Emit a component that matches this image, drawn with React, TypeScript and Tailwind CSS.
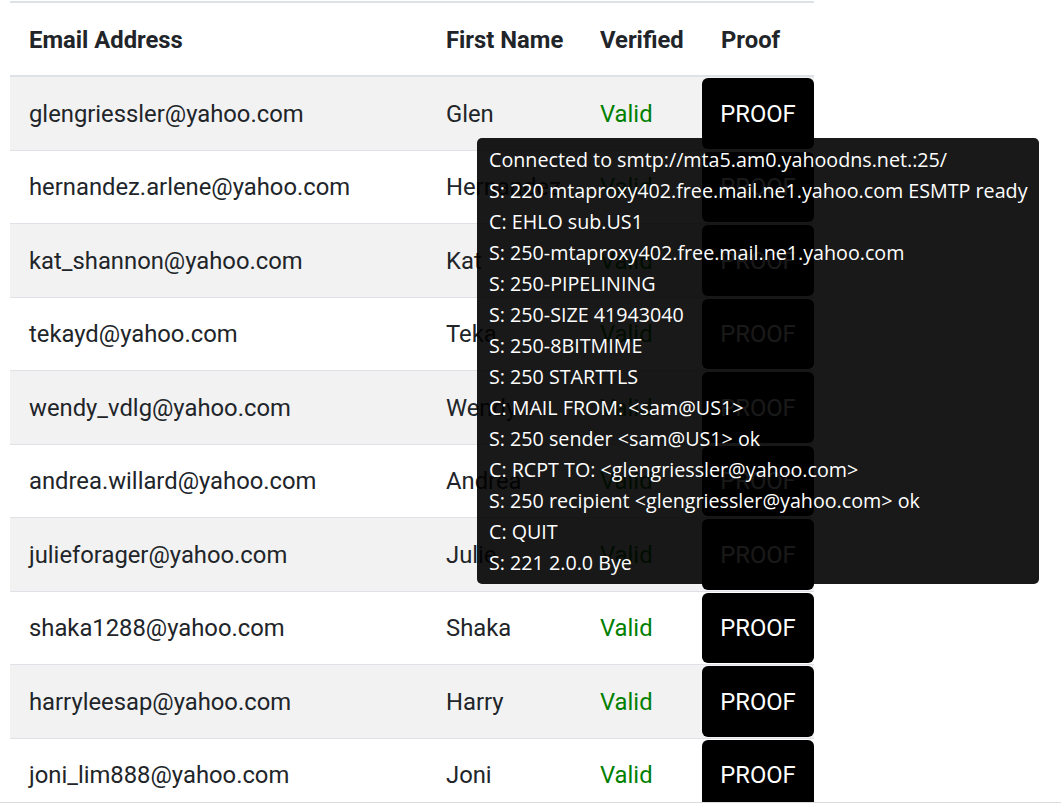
const rows = [
    { email: "glengriessler@yahoo.com", name: "Glen" },
    { email: "hernandez.arlene@yahoo.com", name: "Hernandez" },
    { email: "kat_shannon@yahoo.com", name: "Kat" },
    { email: "tekayd@yahoo.com", name: "Teka" },
    { email: "wendy_vdlg@yahoo.com", name: "Wendy" },
    { email: "andrea.willard@yahoo.com", name: "Andrea" },
    { email: "julieforager@yahoo.com", name: "Julie" },
    { email: "shaka1288@yahoo.com", name: "Shaka" },
    { email: "harryleesap@yahoo.com", name: "Harry" },
    { email: "joni_lim888@yahoo.com", name: "Joni" },
]

const transcript = [
    "Connected to smtp://mta5.am0.yahoodns.net.:25/",
    "S: 220 mtaproxy402.free.mail.ne1.yahoo.com ESMTP ready",
    "C: EHLO sub.US1",
    "S: 250-mtaproxy402.free.mail.ne1.yahoo.com",
    "S: 250-PIPELINING",
    "S: 250-SIZE 41943040",
    "S: 250-8BITMIME",
    "S: 250 STARTTLS",
    "C: MAIL FROM: <sam@US1>",
    "S: 250 sender <sam@US1> ok",
    "C: RCPT TO: <glengriessler@yahoo.com>",
    "S: 250 recipient <glengriessler@yahoo.com> ok",
    "C: QUIT",
    "S: 221 2.0.0 Bye",
]

const cols = "grid grid-cols-[417px_154px_121px_112px] whitespace-nowrap"
const cell = "px-[19px] pt-[3px]"

function ProofTooltip() {
    return (
        <div className="absolute left-[467px] top-[61px] z-10 w-[562px] rounded-[5px] bg-black/90 px-3 py-[6px] text-[19.7px] leading-[31px] text-white [font-family:'Open_Sans',sans-serif] whitespace-nowrap">
            {transcript.map((line) => (
                <div key={line}>{line}</div>
            ))}
        </div>
    )
}

export default function App() {
    return (
        <div className="relative h-[803px] overflow-hidden bg-white text-[#212529] [font-family:Roboto,sans-serif]">
            <div className="ml-[10px] mt-px w-[804px] border-t-2 border-[#dee2e6] text-[23.8px]">
                <div className={`${cols} h-[74px] items-center border-b-2 border-[#dee2e6] font-bold`}>
                    <div className={cell}>Email Address</div>
                    <div className={cell}>First Name</div>
                    <div className={cell}>Verified</div>
                    <div className={cell}>Proof</div>
                </div>
                {rows.map((row, i) => (
                    <div
                        key={row.email}
                        className={`${cols} relative h-[73.5px] items-center border-b border-[#dee2e6] ${
                            i % 2 === 0 ? "bg-[#f2f2f2]" : "bg-white"
                        }`}
                    >
                        <div className={cell}>{row.email}</div>
                        <div className={cell}>{row.name}</div>
                        <div className={`${cell} text-[#008000]`}>Valid</div>
                        <div className="h-full py-px">
                            <button className="flex h-full w-full items-center justify-center rounded-[6px] bg-black pt-[3px] text-white">
                                PROOF
                            </button>
                        </div>
                        {i === 0 && <ProofTooltip />}
                    </div>
                ))}
            </div>
            <div className="absolute bottom-0 left-0 right-0 h-px bg-[#dcdcdc]" />
        </div>
    )
}
